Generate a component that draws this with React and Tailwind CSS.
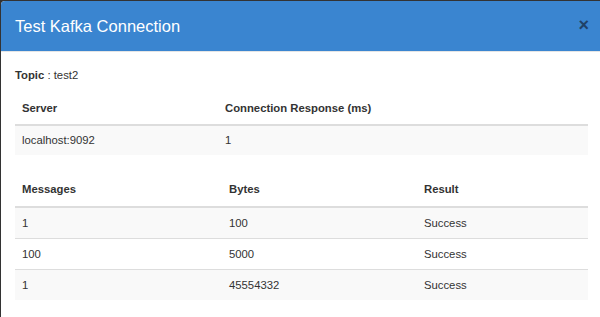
export default function App() {
  const rows = [
    ["1", "100", "Success"],
    ["100", "5000", "Success"],
    ["1", "45554332", "Success"],
  ];
  return (
    <div className="w-[600px] h-[317px] bg-[#333] pt-px pl-px overflow-hidden" style={{ fontFamily: '"Liberation Sans", Arial, sans-serif' }}>
      <div className="h-full bg-white rounded-tl-[4px] overflow-hidden text-[#333]">
        <div className="h-[51px] bg-[#3a85d0] border-b border-[#e5e5e5] flex items-center justify-between pl-[14px] pr-[11px]">
          <div className="text-white text-[16.5px] leading-none">Test Kafka Connection</div>
          <div className="text-[#1e3a5c] text-[18px] font-bold leading-none opacity-90 -mt-[2px]">×</div>
        </div>
        <div className="pl-[14px] pr-[11px]">
          <div className="text-[11.3px] h-[14px] mt-[16px] leading-[14px]">
            <span className="font-bold">Topic</span> : test2
          </div>
          <table className="w-[573px] mt-[9px] text-[11.3px] border-collapse">
            <thead>
              <tr className="h-[34px] border-b-2 border-[#ddd]">
                <th className="w-[202px] text-left font-bold px-[7px] pt-[1px]">Server</th>
                <th className="text-left font-bold px-[8px] pt-[1px]">Connection Response (ms)</th>
              </tr>
            </thead>
            <tbody>
              <tr className="h-[30px] bg-[#f9f9f9]">
                <td className="px-[7px]">localhost:9092</td>
                <td className="px-[8px]">1</td>
              </tr>
            </tbody>
          </table>
          <table className="w-[573px] mt-[17px] text-[11.3px] border-collapse">
            <thead>
              <tr className="h-[35px] border-b-2 border-[#ddd]">
                <th className="w-[207px] text-left font-bold px-[7px] pt-[1px]">Messages</th>
                <th className="w-[195px] text-left font-bold px-[7px] pt-[1px]">Bytes</th>
                <th className="text-left font-bold px-[7px] pt-[1px]">Result</th>
              </tr>
            </thead>
            <tbody>
              {rows.map((r, i) => (
                <tr key={i} className={`h-[31px] ${i > 0 ? "border-t border-[#ddd]" : ""} ${i % 2 === 0 ? "bg-[#f9f9f9]" : "bg-white"}`}>
                  <td className="px-[7px] pt-[1px]">{r[0]}</td>
                  <td className="px-[7px] pt-[1px]">{r[1]}</td>
                  <td className="px-[7px] pt-[1px]">{r[2]}</td>
                </tr>
              ))}
            </tbody>
          </table>
        </div>
      </div>
    </div>
  );
}
